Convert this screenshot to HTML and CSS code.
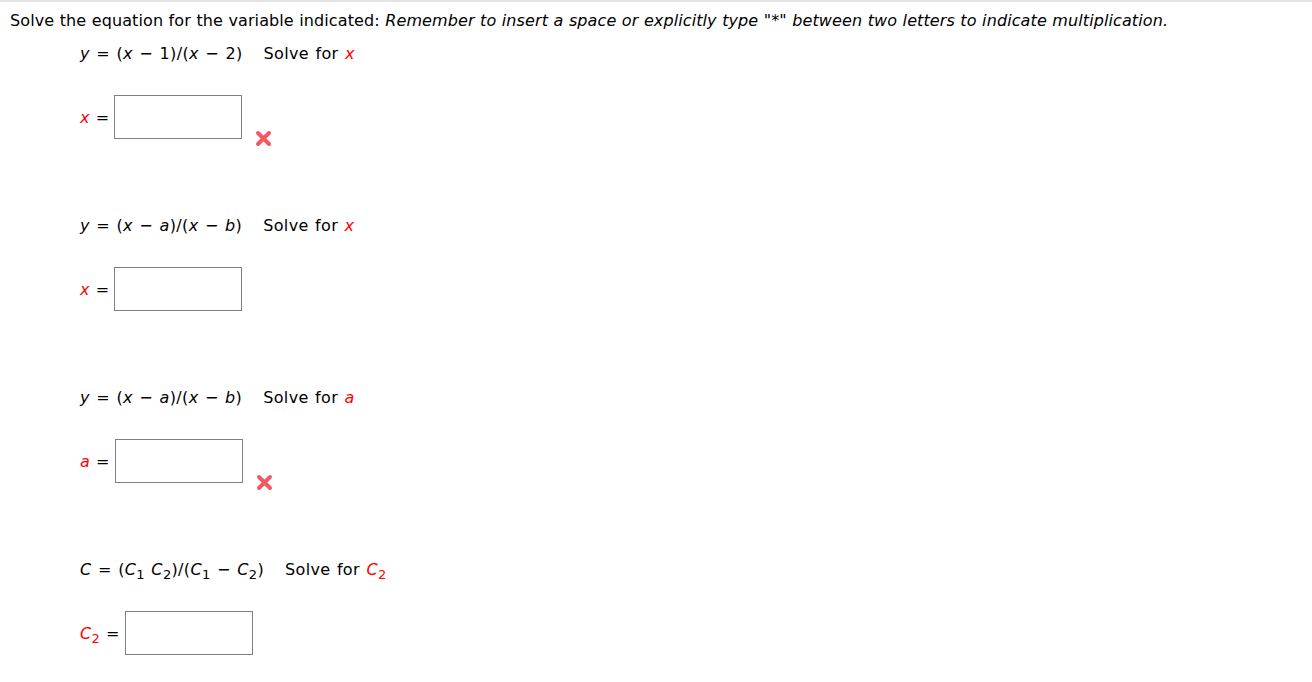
FILE: index.html
```html
<!DOCTYPE html>
<html lang="en">
<head>
	<meta charset="UTF-8">
	<title>Solve for the variable</title>
	<link rel="stylesheet" href="styles.css">
</head>
<body>
	<main class="question">
		<p class="intro">Solve the equation for the variable indicated: <i>Remember to insert a space or explicitly type "*" between two letters to indicate multiplication.</i></p>

		<section class="part">
			<div class="eq"><i>y</i> = (<i>x</i> − 1)/(<i>x</i> − 2)<span class="for">Solve for <i class="var">x</i></span></div>
			<div class="answer">
				<label class="lbl"><i class="var">x</i> =</label>
				<input type="text" class="box">
				<svg class="wrong" width="17" height="17" viewBox="0 0 17 17"><path d="M3 3 L14 14 M14 3 L3 14" stroke="#f25a62" stroke-width="4" stroke-linecap="round"/></svg>
			</div>
		</section>

		<section class="part">
			<div class="eq"><i>y</i> = (<i>x</i> − <i>a</i>)/(<i>x</i> − <i>b</i>)<span class="for">Solve for <i class="var">x</i></span></div>
			<div class="answer">
				<label class="lbl"><i class="var">x</i> =</label>
				<input type="text" class="box">
			</div>
		</section>

		<section class="part">
			<div class="eq"><i>y</i> = (<i>x</i> − <i>a</i>)/(<i>x</i> − <i>b</i>)<span class="for">Solve for <i class="var">a</i></span></div>
			<div class="answer">
				<label class="lbl"><i class="var">a</i> =</label>
				<input type="text" class="box">
				<svg class="wrong" width="17" height="17" viewBox="0 0 17 17"><path d="M3 3 L14 14 M14 3 L3 14" stroke="#f25a62" stroke-width="4" stroke-linecap="round"/></svg>
			</div>
		</section>

		<section class="part">
			<div class="eq"><i>C</i> = (<i>C</i><sub>1</sub> <i>C</i><sub>2</sub>)/(<i>C</i><sub>1</sub> − <i>C</i><sub>2</sub>)<span class="for">Solve for <i class="var">C</i><sub class="var">2</sub></span></div>
			<div class="answer">
				<label class="lbl"><i class="var">C</i><sub class="var">2</sub> =</label>
				<input type="text" class="box">
			</div>
		</section>
	</main>
</body>
</html>
```

FILE: styles.css
```css
html, body {
	margin: 0px;
	padding: 0px;
	background: #fff;
}
body {
	border-top: 2px solid #e4e4e4;
	color: #000;
	font: 16px "DejaVu Sans", Verdana, sans-serif;
}
main.question {
	padding: 7px 10px 0px 10px;
}
p.intro {
	letter-spacing: 0.1px;
	line-height: 24px;
	margin: 0px 0px 9px 0px;
	white-space: nowrap;
	word-spacing: 0.3px;
}

/* parts */
section.part {
	margin: 0px 0px 75px 70px;
}
section.part:last-child {
	margin-bottom: 0px;
}
section.part .eq {
	letter-spacing: 0.35px;
	line-height: 24px;
	white-space: nowrap;
	word-spacing: 1px;
}
section.part .eq span.for {
	margin-left: 21px;
}
.var {
	color: #f00;
}
sub {
	font-size: 13px;
	line-height: 0;
	vertical-align: -4px;
}

section.part .answer {
	display: flex;
	align-items: center;
	height: 44px;
	margin-top: 29px;
}
.answer label.lbl {
	letter-spacing: 0.3px;
	margin-right: 5px;
	white-space: nowrap;
	word-spacing: 0.5px;
}
.answer input.box {
	border: 1px solid #808080;
	box-sizing: border-box;
	height: 44px;
	margin: 0px;
	padding: 0px 4px;
	width: 128px;
}
.answer svg.wrong {
	align-self: flex-end;
	margin: 0px 0px -8px 13px;
}
```
